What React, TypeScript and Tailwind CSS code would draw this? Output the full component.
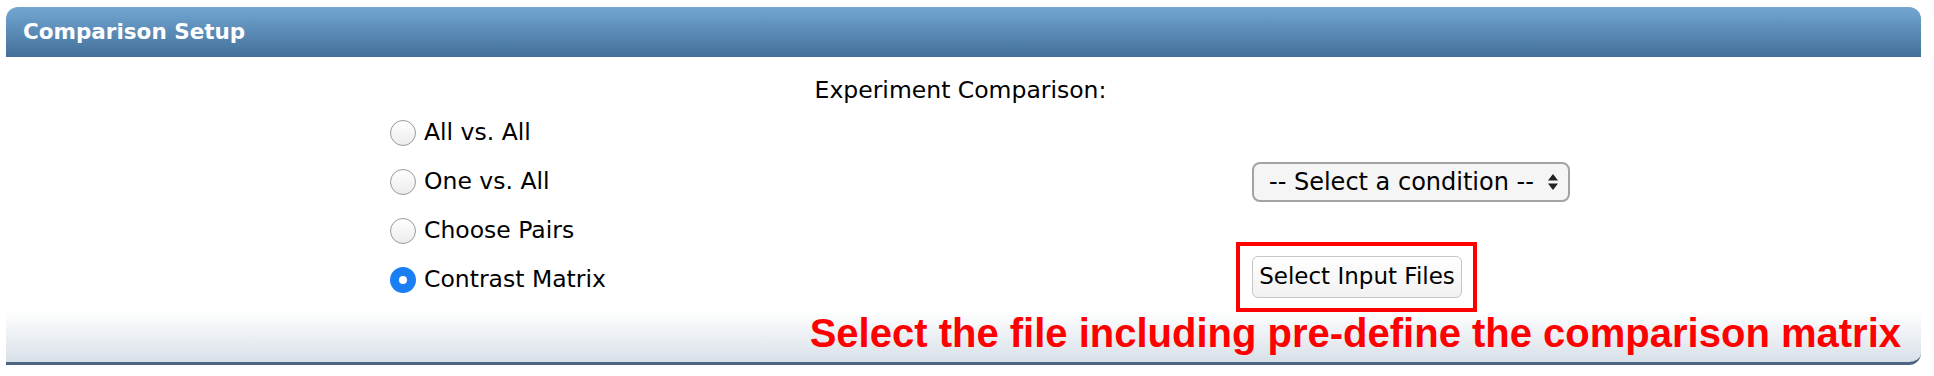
import { useState } from 'react'

const options = ['All vs. All', 'One vs. All', 'Choose Pairs', 'Contrast Matrix']

function Radio({ checked }: { checked: boolean }) {
  if (checked) {
    return (
      <span className="w-[26px] h-[26px] rounded-full bg-[#1a7ff5] flex items-center justify-center shrink-0">
        <span className="w-[8px] h-[8px] rounded-full bg-white" />
      </span>
    )
  }
  return (
    <span className="w-[26px] h-[26px] rounded-full border border-[#9a9a9a] bg-gradient-to-b from-[#ffffff] to-[#ececec] shrink-0" />
  )
}

export default function App() {
  const [selected, setSelected] = useState(3)

  return (
    <div className="w-[1934px] h-[376px] bg-white pt-[7px] font-['DejaVu_Sans',sans-serif] text-black">
      <div className="ml-[6px] w-[1915px]">
        <div className="h-[50px] rounded-t-[12px] bg-gradient-to-b from-[#73a7d3] to-[#43709a] flex items-center pl-[17px]">
          <span className="text-white font-bold text-[21.5px]">Comparison Setup</span>
        </div>

        <div className="pt-[18px]">
          <div className="text-center text-[23.5px] leading-[30px] -ml-[6px]">Experiment Comparison:</div>
          <div className="mt-[3px] grid grid-cols-[862px_auto] pl-[384px]">
            {options.map((opt, i) => (
              <div key={opt} className="contents">
                <label
                  className="h-[49px] flex items-center gap-[8px] text-[23.5px] cursor-pointer"
                  onClick={() => setSelected(i)}
                >
                  <Radio checked={selected === i} />
                  <span>{opt}</span>
                </label>
                <div className="h-[49px] flex items-center">
                  {i === 1 && (
                    <div className="w-[318px] h-[40px] rounded-[8px] border-2 border-[#a3a3a3] bg-[#f5f5f5] flex items-center justify-between pl-[15px] pr-[9px] text-[24px]">
                      <span>-- Select a condition --</span>
                      <svg width="12" height="20" viewBox="0 0 12 20">
                        <path d="M6 2 L11 8.5 L1 8.5 Z" fill="#222" />
                        <path d="M6 18 L11 11.5 L1 11.5 Z" fill="#222" />
                      </svg>
                    </div>
                  )}
                  {i === 3 && (
                    <div className="relative -mt-[6px]">
                      <button className="w-[210px] h-[42px] rounded-[6px] border border-[#c6c6c6] bg-gradient-to-b from-[#ffffff] to-[#f1f1f1] text-[23px] font-['DejaVu_Sans',sans-serif]">
                        Select Input Files
                      </button>
                      <span className="absolute -left-[16px] -right-[15px] -top-[14px] -bottom-[14px] border-4 border-[#ff0000] pointer-events-none" />
                    </div>
                  )}
                </div>
              </div>
            ))}
          </div>
        </div>

        <div className="mt-[7px] h-[54px] rounded-br-[12px] bg-gradient-to-b from-[#ffffff] to-[#d8e0e8] border-b-[3px] border-[#4d6580] flex justify-end pr-[20px] pt-[2px]">
          <span className="text-[#ff0000] font-bold text-[40px] leading-[40px] font-['Liberation_Sans',Arial,sans-serif]">
            Select the file including pre-define the comparison matrix
          </span>
        </div>
      </div>
    </div>
  )
}
